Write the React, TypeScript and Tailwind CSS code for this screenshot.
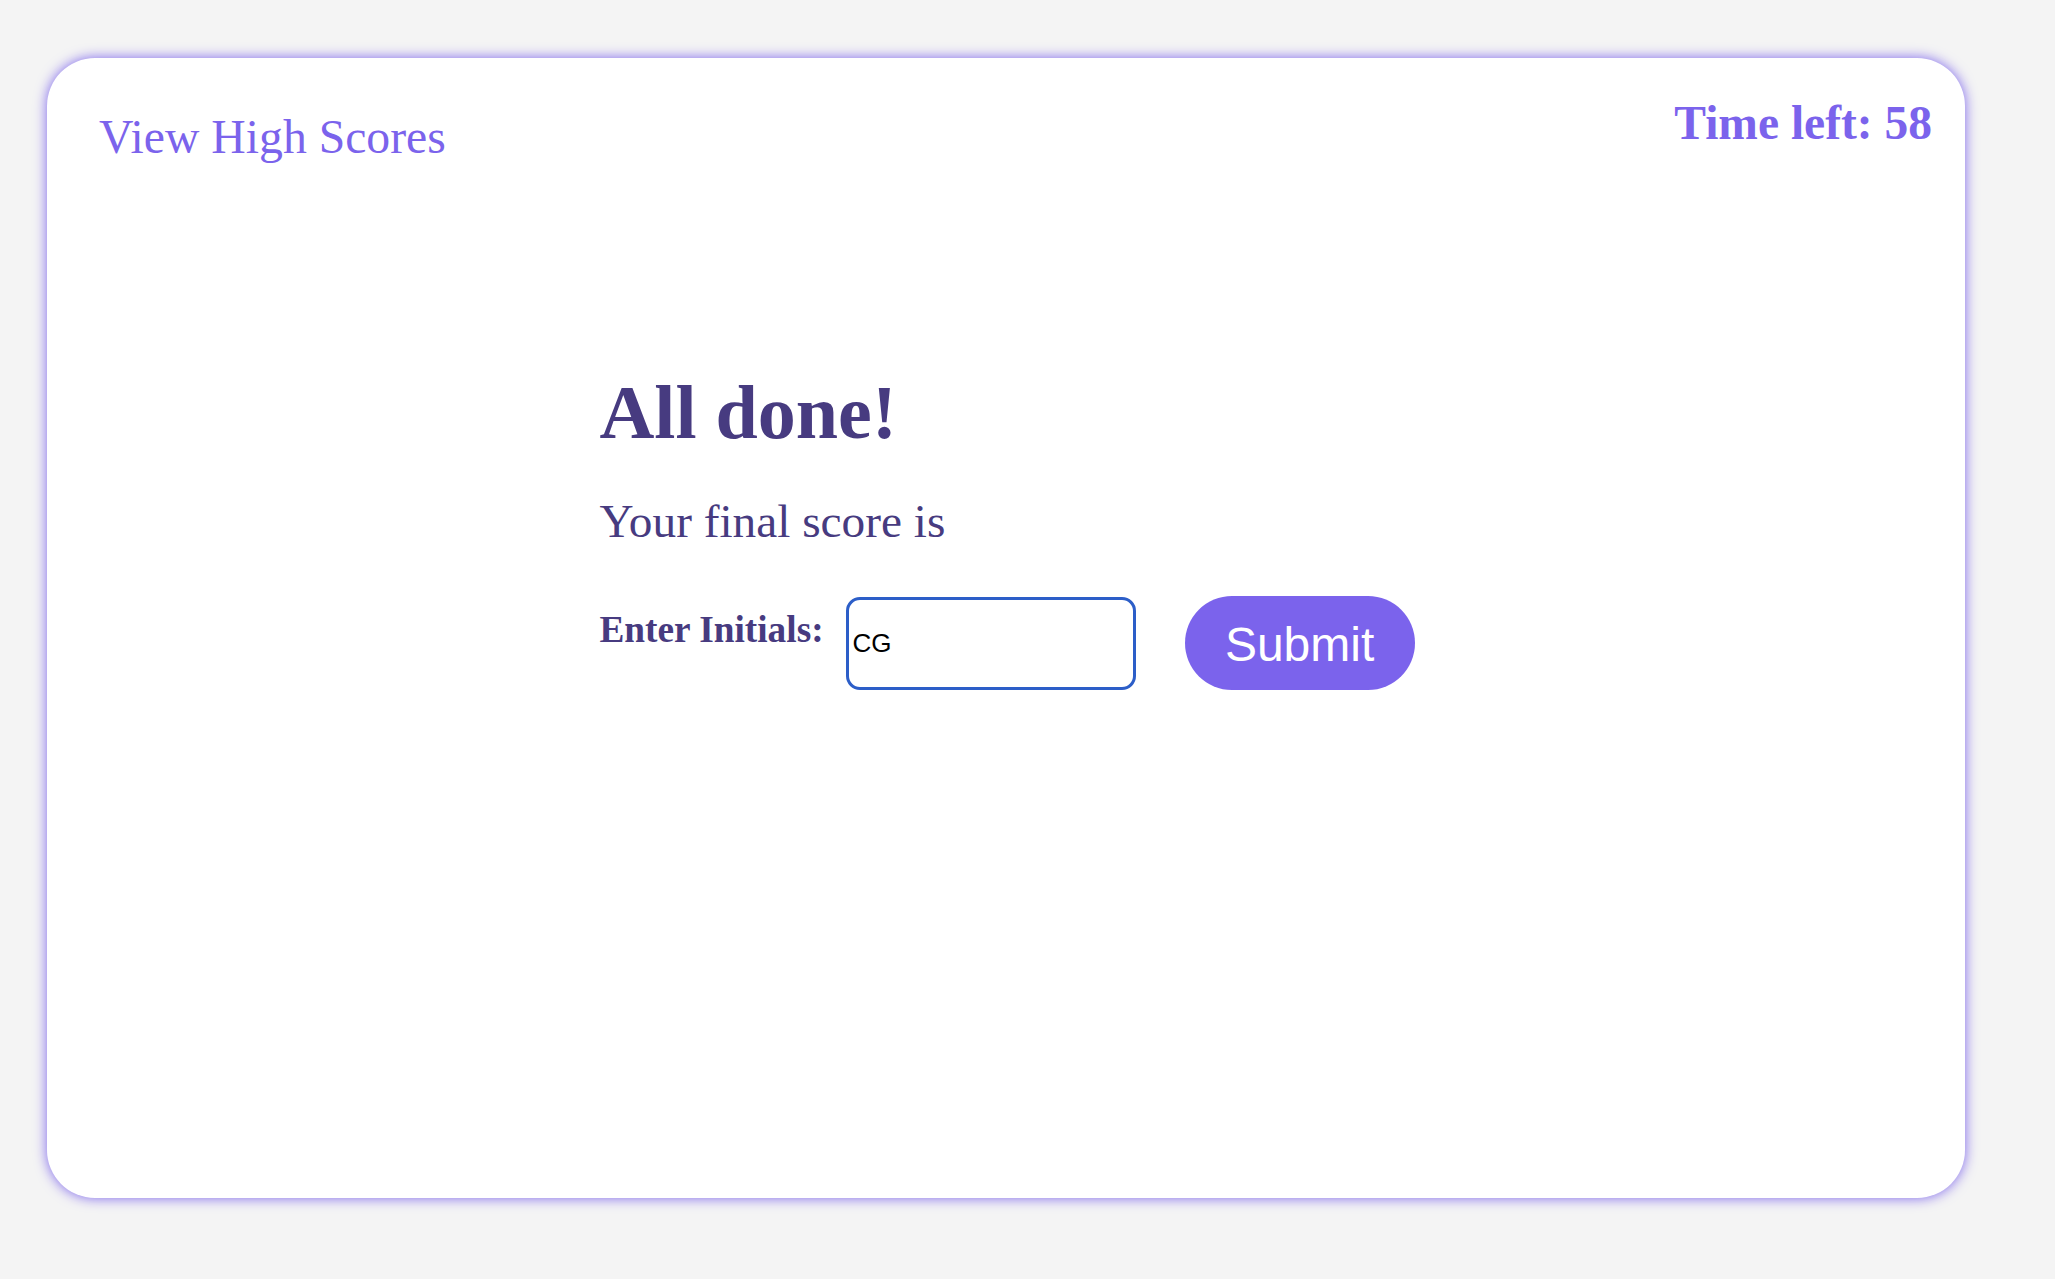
import React from "react";

export default function App() {
  return (
    <div className="min-h-screen w-full bg-[#f4f4f4] pt-[58px] pl-[47px] pb-[81px]" style={{ fontFamily: '"Liberation Serif", "Times New Roman", serif' }}>
      <div className="relative w-[1918px] h-[1140px] rounded-[48px] bg-white shadow-[0_0_13px_#7b63ec]">
        <header className="flex justify-between items-start pt-[42px] pl-[52px] pr-[33px]">
          <a className="mt-[13px] text-[47.7px] leading-none text-[#7b63ec] cursor-pointer">View High Scores</a>
          <div className="text-[47.5px] leading-none font-bold text-[#7b63ec]">Time left: 58</div>
        </header>
        <main className="mx-auto w-fit mt-[213px] translate-x-[1px]">
          <h1 className="text-[76px] leading-none font-bold text-[#473b80]">All done!</h1>
          <p className="mt-[48px] text-[47.3px] leading-none text-[#473b80]">Your final score is</p>
          <div className="mt-[51px] flex items-start">
            <label className="mt-[15px] text-[37.3px] leading-none font-bold text-[#473b80]">Enter Initials:</label>
            <input
              defaultValue="CG"
              className="ml-[22px] mt-[1px] w-[290px] h-[93px] rounded-[14px] border-[3px] border-[#2c5ec8] bg-white px-[4px] text-[26px] text-black outline-none"
              style={{ fontFamily: '"Liberation Sans", Arial, sans-serif' }}
            />
            <button
              className="ml-[49px] w-[230px] h-[94px] rounded-full bg-[#7b63ec] text-white text-[48px] leading-none pt-[4px]"
              style={{ fontFamily: '"Liberation Sans", Arial, sans-serif' }}
            >
              Submit
            </button>
          </div>
        </main>
      </div>
    </div>
  );
}
